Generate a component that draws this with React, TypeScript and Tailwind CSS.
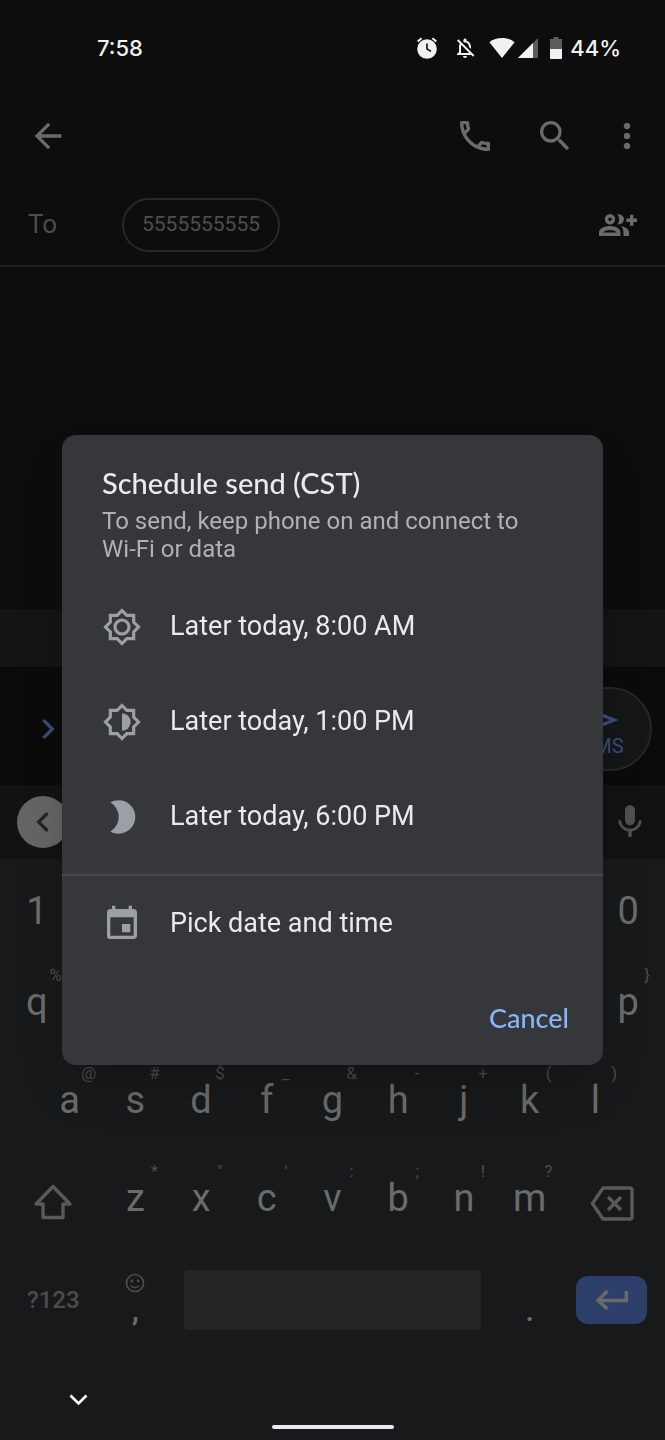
import type { ReactNode } from 'react';
import {
  MdArrowBack,
  MdMoreVert,
  MdOutlineCall,
  MdOutlineNotificationsOff,
  MdSearch,
  MdChevronRight,
  MdChevronLeft,
  MdMic,
  MdEvent,
  MdBrightness2,
} from 'react-icons/md';

const homeRow = [
  ['a', '@'], ['s', '#'], ['d', '$'], ['f', '_'], ['g', '&'],
  ['h', '-'], ['j', '+'], ['k', '('], ['l', ')'],
];

const bottomRow = [
  ['z', '*'], ['x', '"'], ['c', "'"], ['v', ':'],
  ['b', ';'], ['n', '!'], ['m', '?'],
];

const SUN = 'M12 2.1 14.9 5H19v4.1L21.9 12 19 14.9V19h-4.1L12 21.9 9.1 19H5v-4.1L2.1 12 5 9.1V5h4.1z';

function Key({ label, hint, position = '' }: { label: string; hint: string; position?: string }) {
  return (
    <button className={`col-span-2 flex h-[98px] flex-col pt-[11px] ${position}`}>
      <span className="w-full pl-[38px] text-center text-[17px] leading-5 text-[#4b4c4d]">{hint}</span>
      <span className="w-full text-center text-[38px] leading-[34px]">{label}</span>
    </button>
  );
}

function StatusBar() {
  return (
    <div className="flex h-24 items-center justify-between pl-[97px] pr-11 font-['Inter',sans-serif] text-[22px] font-medium text-[#f1f1f1]">
      <span>7:58</span>
      <div className="flex items-center">
        <svg className="mr-3.5 size-6" viewBox="0 0 24 24" fill="currentColor">
          <circle cx="12" cy="13" r="9.8" />
          <path d="M2.600 5.600 6.600 2.200M21.400 5.600l-4-3.400" stroke="currentColor" strokeWidth="2" />
          <path d="M12 7.500V13l4 2.400" fill="none" stroke="#0d0d0e" strokeWidth="1.600" />
        </svg>
        <MdOutlineNotificationsOff className="mr-3 size-6" />
        <svg className="mr-[3px] h-5 w-[26px]" viewBox="0 0 26 20" fill="currentColor">
          <path d="M13 20 .4 4.200C4 1.400 8.300 0 13 0s9 1.400 12.600 4.200z" />
        </svg>
        <svg className="mr-3 size-5" viewBox="0 0 20 20" fill="currentColor">
          <path d="M20 0v20H0z" opacity=".35" />
          <path d="M15 5v15H0z" />
        </svg>
        <svg className="mr-2 h-[22px] w-3" viewBox="0 0 12 22" fill="currentColor">
          <path d="M3.500 0h5v2H12v10H0V2h3.500z" opacity=".35" />
          <path d="M0 12h12v9a1 1 0 0 1-1 1H1a1 1 0 0 1-1-1z" />
        </svg>
        <span>44%</span>
      </div>
    </div>
  );
}

function Header() {
  return (
    <header className="border-b-2 border-[#1f2021] text-[#6b6b6b]">
      <div className="flex h-20 items-center pl-7 pr-[18px]">
        <button aria-label="Back" className="mr-auto"><MdArrowBack className="size-10" /></button>
        <button aria-label="Call" className="mr-10"><MdOutlineCall className="size-10" /></button>
        <button aria-label="Search" className="mr-8"><MdSearch className="size-10" /></button>
        <button aria-label="More options"><MdMoreVert className="size-10" /></button>
      </div>
      <div className="flex h-[89px] items-center pl-7 pr-7 pt-2">
        <span className="w-[94px] text-[26px] text-[#4d4d4e]">To</span>
        <button className="h-[54px] rounded-full border-2 border-[#29292a] px-[18px] text-[21px] text-[#4d4d4e]">5555555555</button>
        <button aria-label="Add people" className="ml-auto">
          <svg className="h-6 w-[38px]" viewBox="0 0 38 24" fill="currentColor">
            <circle cx="11" cy="6.300" r="3.500" fill="none" stroke="currentColor" strokeWidth="3.400" />
            <path d="M11 13c-4.500 0-11 2-11 6.500V23h21.500v-3.500C21.500 15 15.500 13 11 13zm-7 6.600c1-1.600 4.200-2.700 7-2.700s6 1.100 7 2.700z" fillRule="evenodd" />
            <path d="M18.500 1.200c3.500-.4 6.500 1.800 6.500 5.100s-3 5.500-6.500 5.100c2.200-3 2.200-7.200 0-10.200zM22 13.300c4.500.8 8 2.700 8 6.200V23h-5.500v-3.500c0-2.600-.8-4.500-2.500-6.200z" />
            <path d="M31 1.800h3.400v3.700H38V9h-3.600v3.700H31V9h-3.600V5.500H31z" />
          </svg>
        </button>
      </div>
    </header>
  );
}

function Keyboard() {
  return (
    <div className="bg-[#18191a] text-[#6a6b6b]">
      <div className="flex h-[74px] items-center justify-between bg-[#111213] pl-[17px] pr-[15px]">
        <button aria-label="Collapse toolbar" className="grid size-[52px] place-items-center rounded-full bg-[#656565] text-[#222]">
          <MdChevronLeft className="size-10" />
        </button>
        <button aria-label="Voice typing" className="text-[#505152]"><MdMic className="size-10" /></button>
      </div>

      <div className="grid grid-cols-20 px-1">
        <button className="col-span-2 h-[95px] pt-2 text-[38px] leading-[34px]">1</button>
        <button className="col-span-2 col-start-19 h-[95px] pt-2 text-[38px] leading-[34px]">0</button>
        <Key label="q" hint="%" />
        <Key label="p" hint="}" position="col-start-19" />
        {homeRow.map(([label, hint], i) => (
          <Key key={label} label={label} hint={hint} position={i === 0 ? 'col-start-2' : ''} />
        ))}

        <button aria-label="Shift" className="col-span-3 col-start-1 grid place-items-center pt-1.5 text-[#585959]">
          <svg className="h-9 w-10" viewBox="0 0 40 36" fill="none" stroke="currentColor" strokeWidth="3.400" strokeLinejoin="round">
            <path d="M20 2.500 3 20h7v13.500h20V20h7z" />
          </svg>
        </button>
        {bottomRow.map(([label, hint]) => <Key key={label} label={label} hint={hint} />)}
        <button aria-label="Delete" className="col-span-3 grid place-items-center pt-2 text-[#585959]">
          <svg className="h-9 w-11" viewBox="0 0 44 36" fill="none" stroke="currentColor" strokeWidth="3.400" strokeLinejoin="round">
            <path d="M13 3h27a2 2 0 0 1 2 2v27a2 2 0 0 1-2 2H13L2.500 18.500z" />
            <path d="m18 12 13 13M31 12 18 25" />
          </svg>
        </button>
      </div>

      <div className="grid h-[104px] grid-cols-20 items-center px-1">
        <button className="col-span-3 text-2xl font-medium text-[#4b4c4d]">?123</button>
        <button className="col-span-2 flex h-[54px] flex-col items-center">
          <svg className="size-5 shrink-0 text-[#4b4c4d]" viewBox="0 0 20 20" fill="currentColor">
            <circle cx="10" cy="10" r="8.500" fill="none" stroke="currentColor" strokeWidth="1.700" />
            <circle cx="6.800" cy="8" r="1.400" />
            <circle cx="13.200" cy="8" r="1.400" />
            <path d="M5.800 12.300c1.800 3 6.600 3 8.400 0" fill="none" stroke="currentColor" strokeWidth="1.600" />
          </svg>
          <span className="text-[32px] font-medium leading-[34px]">,</span>
        </button>
        <button aria-label="Space" className="col-span-10 mx-4 h-[60px] rounded bg-[#242526]"></button>
        <button className="col-span-2 flex h-[54px] items-end justify-center text-[32px] font-medium leading-[34px]">.</button>
        <button aria-label="Enter" className="col-span-3 mx-auto grid h-12 w-[71px] place-items-center rounded-xl bg-[#2d3f6b]">
          <svg className="h-5 w-8" viewBox="0 0 32 20" fill="none" stroke="currentColor" strokeWidth="3.400">
            <path d="M30.300 1v9.500H2M11.500 1 2 10.500l9.500 8.500" />
          </svg>
        </button>
      </div>

      <nav className="flex flex-col px-16 pb-[11px] pt-[33px] text-white">
        <button aria-label="Hide keyboard" className="self-start">
          <svg className="size-7" viewBox="0 0 28 28" fill="none" stroke="currentColor" strokeWidth="2.600">
            <path d="m6.500 10.500 8 8 8-8" />
          </svg>
        </button>
        <div className="mx-auto mt-3 h-1 w-[122px] rounded-full bg-[#e8eaed]"></div>
      </nav>
    </div>
  );
}

function Option({ icon, children }: { icon: ReactNode; children: ReactNode }) {
  return (
    <button className="flex h-[95px] w-full items-center gap-7 px-10 text-left text-[27px] text-[#e8eaed]">
      <span className="text-[#9aa0a6]">{icon}</span>
      {children}
    </button>
  );
}

function ScheduleDialog() {
  return (
    <div className="fixed inset-0 flex items-center px-[62px] pt-[60px]">
      <div role="dialog" aria-labelledby="schedule-title" className="w-full rounded-[14px] bg-[#36373a] shadow-2xl">
        <div className="h-36 pl-10 pr-16 pt-8">
          <h2 id="schedule-title" className="font-['Lato','Roboto',sans-serif] text-[29px] font-medium leading-8 text-[#e8eaed]">Schedule send (CST)</h2>
          <p className="mt-2 text-2xl leading-7 text-[#afb1b3]">To send, keep phone on and connect to Wi-Fi or data</p>
        </div>
        <Option
          icon={
            <svg className="size-10" viewBox="0 0 24 24" fill="none" stroke="currentColor" strokeWidth="1.900">
              <path d={SUN} />
              <circle cx="12" cy="12" r="4.200" />
            </svg>
          }
        >
          Later today, 8:00 AM
        </Option>
        <Option
          icon={
            <svg className="size-10" viewBox="0 0 24 24" fill="none" stroke="currentColor" strokeWidth="1.900">
              <path d={SUN} />
              <path d="M12 6.800a5.200 5.200 0 0 1 0 10.400z" fill="currentColor" stroke="none" />
            </svg>
          }
        >
          Later today, 1:00 PM
        </Option>
        <Option icon={<MdBrightness2 className="size-10" />}>Later today, 6:00 PM</Option>
        <div className="mt-2.5 border-t-2 border-[#47484b]">
          <Option icon={<MdEvent className="size-10" />}>Pick date and time</Option>
        </div>
        <div className="flex h-[94px] items-center justify-end pr-[34px]">
          <button className="font-['Lato','Roboto',sans-serif] text-[27px] font-medium text-[#8ab4f8]">Cancel</button>
        </div>
      </div>
    </div>
  );
}

export default function App() {
  return (
    <div className="flex min-h-screen flex-col bg-[#0d0d0e] font-['Roboto',sans-serif]">
      <StatusBar />
      <Header />
      <main className="flex-1"></main>
      <div className="h-[58px] bg-[#131415]"></div>
      <div className="flex h-[118px] items-center justify-between bg-[#0b0b0c] pl-7 pr-[13px] pt-1.5 text-[#3a4d78]">
        <button aria-label="Expand"><MdChevronRight className="size-10" /></button>
        <button className="flex h-[84px] w-[98px] flex-col items-center justify-center rounded-full border-2 border-[#252627] bg-[#141617] pt-2.5 text-xl leading-7">
          <svg className="h-6 w-[30px]" viewBox="0 0 30 24" fill="none" stroke="currentColor" strokeWidth="3">
            <path d="M2 2.500 26.500 12 2 21.500V12h12" />
          </svg>
          SMS
        </button>
      </div>
      <Keyboard />
      <ScheduleDialog />
    </div>
  );
}
